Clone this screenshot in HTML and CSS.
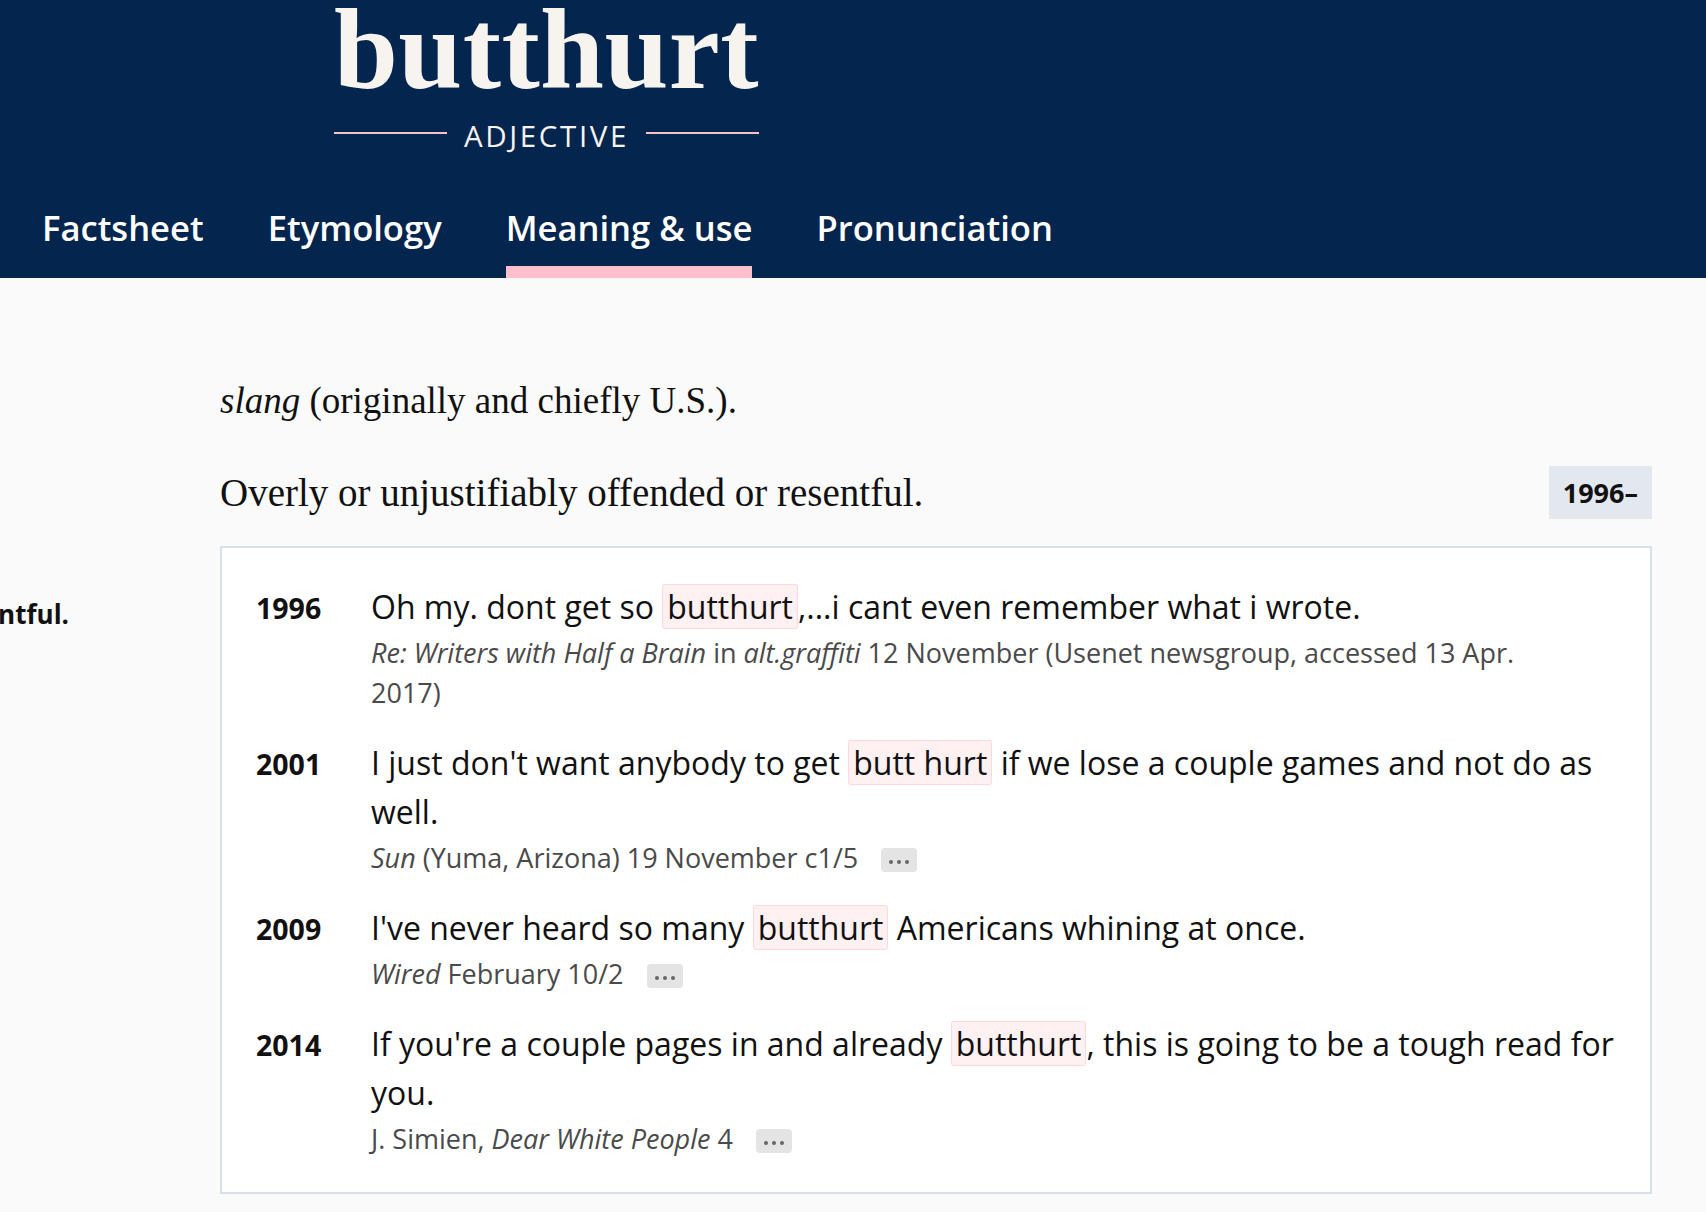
FILE: index.html
```html
<!DOCTYPE html>
<html lang="en">
<head>
    <meta charset="UTF-8">
    <meta name="viewport" content="width=device-width, initial-scale=1.0">
    <title>butthurt, adj. — Meaning &amp; use</title>
    <link rel="stylesheet" href="styles.css">
</head>
<body>
    <header class="entry-header">
        <div class="headword">
            <h1 class="headword-title">butthurt</h1>
            <div class="pos">
                <span class="pos-rule"></span>
                <span class="pos-label">Adjective</span>
                <span class="pos-rule"></span>
            </div>
        </div>
        <nav class="entry-tabs">
            <a href="#factsheet" class="tab">Factsheet</a>
            <a href="#etymology" class="tab">Etymology</a>
            <a href="#meaning" class="tab active">Meaning &amp; use</a>
            <a href="#pronunciation" class="tab">Pronunciation</a>
        </nav>
    </header>

    <main class="entry-body">
        <aside class="sense-nav">
            <span class="sense-nav-item">Overly or unjustifiably offended or resentful.</span>
        </aside>

        <section class="sense" id="meaning">
            <p class="register"><i>slang</i> (originally and chiefly U.S.).</p>

            <div class="definition-row">
                <p class="definition">Overly or unjustifiably offended or resentful.</p>
                <span class="date-range">1996–</span>
            </div>

            <div class="quotations">
                <div class="quotation">
                    <span class="quote-year">1996</span>
                    <div class="quote-body">
                        <p class="quote-text">Oh my. dont get so <mark class="hw">butthurt</mark>,...i cant even remember what i wrote.</p>
                        <p class="quote-cite"><i>Re: Writers with Half a Brain</i> in <i>alt.graffiti</i> 12 November (Usenet newsgroup, accessed 13 Apr. 2017)</p>
                    </div>
                </div>

                <div class="quotation">
                    <span class="quote-year">2001</span>
                    <div class="quote-body">
                        <p class="quote-text">I just don't want anybody to get <mark class="hw">butt hurt</mark> if we lose a couple games and not do as well.</p>
                        <p class="quote-cite"><i>Sun</i> (Yuma, Arizona) 19 November c1/5
                            <button class="more-btn" aria-label="Show more"><svg width="22" height="6" viewBox="0 0 22 6"><circle cx="3" cy="3" r="2"/><circle cx="11" cy="3" r="2"/><circle cx="19" cy="3" r="2"/></svg></button>
                        </p>
                    </div>
                </div>

                <div class="quotation">
                    <span class="quote-year">2009</span>
                    <div class="quote-body">
                        <p class="quote-text">I've never heard so many <mark class="hw">butthurt</mark> Americans whining at once.</p>
                        <p class="quote-cite"><i>Wired</i> February 10/2
                            <button class="more-btn" aria-label="Show more"><svg width="22" height="6" viewBox="0 0 22 6"><circle cx="3" cy="3" r="2"/><circle cx="11" cy="3" r="2"/><circle cx="19" cy="3" r="2"/></svg></button>
                        </p>
                    </div>
                </div>

                <div class="quotation">
                    <span class="quote-year">2014</span>
                    <div class="quote-body">
                        <p class="quote-text">If you're a couple pages in and already <mark class="hw">butthurt</mark>, this is going to be a tough read for you.</p>
                        <p class="quote-cite">J. Simien, <i>Dear White People</i> 4
                            <button class="more-btn" aria-label="Show more"><svg width="22" height="6" viewBox="0 0 22 6"><circle cx="3" cy="3" r="2"/><circle cx="11" cy="3" r="2"/><circle cx="19" cy="3" r="2"/></svg></button>
                        </p>
                    </div>
                </div>
            </div>
        </section>
    </main>
</body>
</html>
```

FILE: styles.css
```css
body {
    margin: 0;
    background: #fafafa;
    color: #111;
    font-family: "Open Sans", Arial, sans-serif;
    overflow-x: hidden;
}

/* header: headword + tabs */
.entry-header {
    background: #03254e;
}
.headword {
    display: inline-flex;
    flex-direction: column;
    margin-left: 334px;
}
.headword-title {
    margin: 0;
    font-family: "Liberation Serif", "Times New Roman", serif;
    font-weight: bold;
    font-size: 115px;
    line-height: 100px;
    color: #f7f3ef;
    letter-spacing: 0.4px;
}
.pos {
    display: flex;
    align-items: center;
    gap: 17px;
    margin-top: 18px;
}
.pos-rule {
    flex: 1;
    height: 2px;
    background: #f9bfca;
    margin-bottom: 6px;
}
.pos-label {
    font-size: 29.5px;
    line-height: 36px;
    letter-spacing: 2.6px;
    text-transform: uppercase;
    color: #f7f3ef;
}
.entry-tabs {
    display: flex;
    gap: 64px;
    padding-left: 42px;
    margin-top: 50px;
}
.tab {
    display: block;
    font-size: 34.6px;
    font-weight: 600;
    line-height: 48px;
    color: #fff;
    text-decoration: none;
    padding-bottom: 14px;
    border-bottom: 12px solid transparent;
}
.tab.active {
    border-bottom-color: #ffbfcb;
}

/* body */
.entry-body {
    display: flex;
    gap: 151px;
    padding-top: 100px;
    padding-bottom: 19px;
}
.sense-nav {
    flex: 0 0 69px;
    min-width: 0;
    display: flex;
    justify-content: flex-end;
    padding-top: 218px;
}
.sense-nav-item {
    flex: none;
    white-space: nowrap;
    font-size: 26px;
    font-weight: bold;
    line-height: 36px;
}
.sense {
    flex: 0 0 1432px;
    min-width: 0;
}
.register,
.definition {
    margin: 0;
    font-family: "Liberation Serif", "Times New Roman", serif;
    font-size: 37px;
    line-height: 46px;
    color: #111;
}
.definition {
    font-size: 39px;
}
.definition-row {
    display: flex;
    align-items: center;
    justify-content: space-between;
    margin-top: 42px;
}
.date-range {
    height: 53px;
    line-height: 53px;
    padding: 0 14px;
    background: #e3e8ef;
    font-size: 27px;
    font-weight: bold;
}

/* quotation box */
.quotations {
    margin-top: 27px;
    background: #fff;
    border: 2px solid #d8e1ea;
    padding: 34px 10px 33px 34px;
    display: flex;
    flex-direction: column;
    gap: 25px;
}
.quotation {
    display: grid;
    grid-template-columns: 115px 1fr;
    align-items: baseline;
}
.quote-year {
    font-size: 28.5px;
    font-weight: bold;
    line-height: 49px;
}
.quote-text {
    margin: 0;
    font-size: 32px;
    line-height: 49px;
    color: #111;
}
.hw {
    background: #fff0f2;
    color: inherit;
    border: 1px solid #fbd9df;
    border-radius: 3px;
    padding: 0 4px;
}
.quote-cite {
    margin: 2px 0 0;
    max-width: 1190px;
    font-size: 27px;
    line-height: 40px;
    color: #4a4a4a;
}
.more-btn {
    display: inline-flex;
    align-items: center;
    justify-content: center;
    width: 36px;
    height: 24px;
    margin-left: 16px;
    padding: 0;
    border: none;
    border-radius: 4px;
    background: #e4e4e4;
    vertical-align: 3px;
    cursor: pointer;
}
.more-btn svg {
    display: block;
    fill: #666;
    margin-top: 4px;
}
```
